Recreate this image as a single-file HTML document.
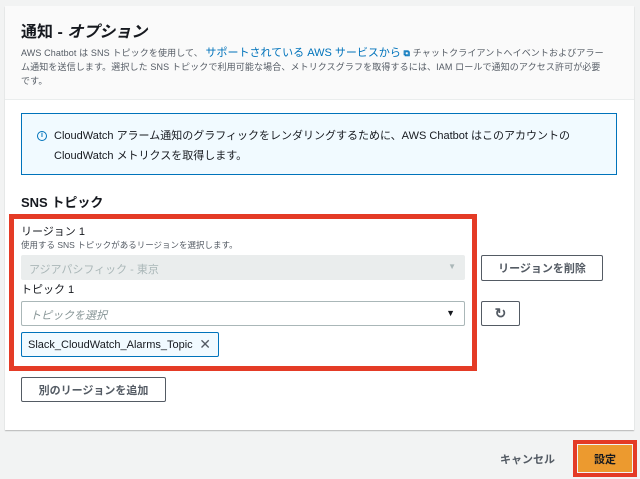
<!DOCTYPE html>
<html><head><meta charset="utf-8"><style>
*{box-sizing:border-box;margin:0;padding:0}
body{width:640px;height:479px;background:#f2f3f3;font-family:"Liberation Sans","Noto Sans CJK JP",sans-serif;color:#16191f;position:relative;overflow:hidden}
.abs{position:absolute}
.card{left:5px;top:6px;width:629px;height:424px;background:#fff;box-shadow:0 1px 1px rgba(0,0,0,.25);}
.hdr{left:5px;top:6px;width:629px;height:94px;background:#fafafa;border-bottom:1px solid #eaeded}
.btn{position:absolute;border:1px solid #545b64;background:#fff;border-radius:2px;font-size:11px;font-weight:bold;color:#545b64;display:flex;align-items:center;justify-content:center}
</style></head><body>
<div class="abs card"></div>
<div class="abs hdr"></div>
<div class="abs" style="left:21px;top:18px;font-size:16px;font-weight:bold">通知 - <i>オプション</i></div>
<div class="abs" style="left:21px;top:46px;font-size:9px;line-height:14px;color:#545b64;white-space:nowrap;letter-spacing:0.12px">AWS Chatbot は SNS トピックを使用して、 <span style="color:#0073bb;font-size:11px;letter-spacing:0">サポートされている AWS サービスから</span> <span style="color:#0073bb;font-weight:bold">⧉</span> チャットクライアントへイベントおよびアラー<br>ム通知を送信します。選択した SNS トピックで利用可能な場合、メトリクスグラフを取得するには、IAM ロールで通知のアクセス許可が必要<br>です。</div>
<div class="abs" style="left:21px;top:113px;width:596px;height:62px;background:#f1faff;border:1px solid #0073bb"></div>
<div class="abs" style="left:37px;top:131px;width:10px;height:10px;border:1.5px solid #0073bb;border-radius:50%;font-size:7px;color:#0073bb;text-align:center;line-height:8px;font-weight:bold">i</div>
<div class="abs" style="left:54px;top:126px;font-size:11px;line-height:20px">CloudWatch アラーム通知のグラフィックをレンダリングするために、AWS Chatbot はこのアカウントの<br>CloudWatch メトリクスを取得します。</div>
<div class="abs" style="left:21px;top:192px;font-size:13px;font-weight:bold">SNS トピック</div>
<div class="abs" style="left:9px;top:214px;width:468px;height:157px;border:5px solid #e43b26"></div>
<div class="abs" style="left:21px;top:223px;font-size:11px">リージョン 1</div>
<div class="abs" style="left:21px;top:239px;font-size:8.5px;color:#545b64">使用する SNS トピックがあるリージョンを選択します。</div>
<div class="abs" style="left:21px;top:255px;width:444px;height:25px;background:#eaeded;border-radius:2px;font-size:11px;color:#aab7b8;padding:6px 0 0 8px">アジアパシフィック - 東京<span style="position:absolute;right:9px;top:7px;font-size:8px">▼</span></div>
<div class="abs" style="left:21px;top:281px;font-size:11px">トピック 1</div>
<div class="abs" style="left:21px;top:301px;width:444px;height:25px;border:1px solid #aab7b8;border-radius:2px;font-size:11px;color:#879596;font-style:italic;padding:5px 0 0 8px">トピックを選択<span style="position:absolute;right:9px;top:6px;font-size:9px;color:#16191f;font-style:normal">▼</span></div>
<div class="abs" style="left:21px;top:332px;width:198px;height:25px;background:#f1faff;border:1px solid #0073bb;border-radius:2px;font-size:11px;padding:6px 0 0 6px">Slack_CloudWatch_Alarms_Topic<span style="position:absolute;right:7px;top:3px;font-size:14px;color:#545b64">✕</span></div>
<div class="btn" style="left:481px;top:255px;width:122px;height:26px">リージョンを削除</div>
<div class="btn" style="left:481px;top:301px;width:39px;height:25px;font-size:14px">↻</div>
<div class="btn" style="left:21px;top:377px;width:145px;height:25px">別のリージョンを追加</div>
<div class="abs" style="left:500px;top:451px;font-size:11px;font-weight:bold;color:#545b64">キャンセル</div>
<div class="abs" style="left:573px;top:440px;width:64px;height:37px;border:4px solid #e43b26"></div>
<div class="abs" style="left:578px;top:445px;width:54px;height:27px;background:#ec9a2f;font-size:11px;font-weight:bold;display:flex;align-items:center;justify-content:center">設定</div>
</body></html>
